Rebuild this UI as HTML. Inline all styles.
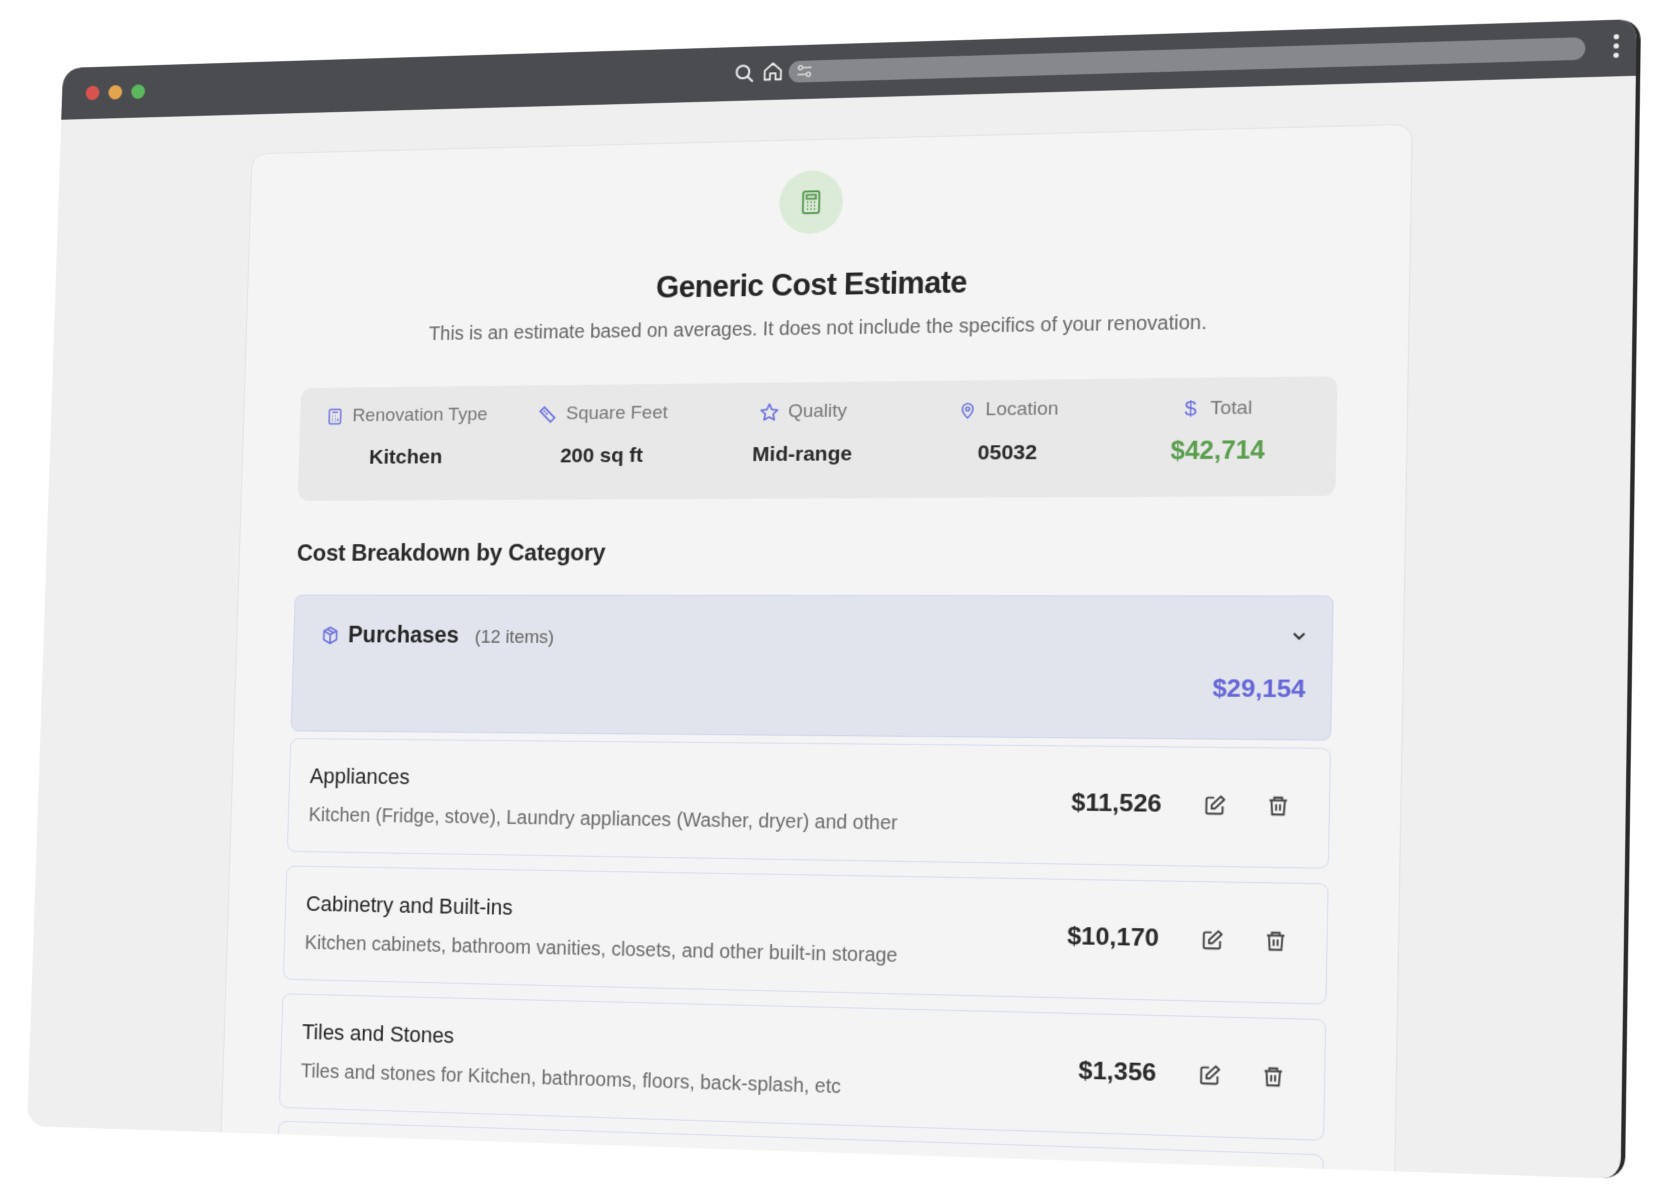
<!DOCTYPE html>
<html><head><meta charset="utf-8">
<style>
*{box-sizing:border-box;margin:0;padding:0}
html,body{width:1662px;height:1186px;background:#fff;overflow:hidden;font-family:"Liberation Sans",sans-serif}
#win{position:absolute;left:0;top:0;width:1590px;height:1110px;transform-origin:0 0;
transform:matrix3d(0.902333,-0.031862,0,-0.00005492, -0.032757,0.939568,0,-0.00001206, 0,0,1,0, 63,68,0,1);
background:#efefef;border-radius:20px;overflow:hidden;border-right:4px solid #2a2a2a;box-shadow:0 0 2px rgba(0,0,0,.2);clip-path:inset(0 round 20px)}
#bar{position:absolute;left:0;top:0;width:100%;height:55px;background:#4b4c50}
.dot{position:absolute;top:20px;width:15px;height:15px;border-radius:50%}
.abs{position:absolute}
#card{position:absolute;left:209px;top:96px;width:1170px;height:1100px;background:#f4f4f4;border:1px solid #e3e3e3;border-radius:16px}
.title{left:0;width:1590px;text-align:center;font-weight:bold;font-size:30.5px;color:#262626;letter-spacing:-0.6px}
.sub{left:0;width:1590px;text-align:center;font-size:19.5px;color:#666}
#stats{left:270px;top:342px;width:1042px;height:117px;background:#e8e8e8;border-radius:12px;display:flex;padding:0 11px}
.col{flex:1;text-align:center;position:relative}
.lab{position:absolute;top:19px;left:0;right:0;font-size:19px;color:#777;display:flex;justify-content:center;align-items:center;gap:9px}
.val{position:absolute;top:61px;left:0;right:0;font-size:21px;font-weight:bold;color:#2a2a2a}
.head{left:271px;top:500px;font-size:23.5px;font-weight:bold;color:#2a2a2a;letter-spacing:-0.2px}
#pur{left:270px;top:556px;width:1042px;height:141px;background:#e1e4ec;border:1px solid #cfd6ee;border-radius:8px}
.item{position:absolute;left:270px;width:1042px;height:117px;background:#f4f4f4;border:1.5px solid #d6dcf0;border-radius:9px}
.it{position:absolute;left:21px;top:26px;font-size:21.5px;color:#262626}
.id{position:absolute;left:21px;top:67px;font-size:19.5px;color:#6b6b6b}
.pr{position:absolute;right:159px;top:42px;font-size:24.5px;font-weight:bold;color:#2a2a2a}
.ed{position:absolute;right:97px;top:45px}
.tr{position:absolute;right:37px;top:45px}
</style></head><body>
<div id="win">
 <div id="bar">
  <div class="dot" style="left:26px;background:#d9534f"></div>
  <div class="dot" style="left:51px;background:#e2a54d"></div>
  <div class="dot" style="left:76px;background:#5cb85c"></div>
  <svg class="abs" style="left:712px;top:16px" width="22" height="22" viewBox="0 0 24 24" fill="none" stroke="#eee" stroke-width="2.2" stroke-linecap="round"><circle cx="10.5" cy="10.5" r="7"/><path d="M16 16l5 5"/></svg>
  <svg class="abs" style="left:741px;top:15px" width="22" height="22" viewBox="0 0 24 24" fill="none" stroke="#eee" stroke-width="2" stroke-linejoin="round"><path d="M3 11L12 3l9 8v10h-6v-7h-6v7H3z"/></svg>
  <div class="abs" style="left:768px;top:16px;width:771px;height:22px;border-radius:11px;background:#86888b"></div>
  <svg class="abs" style="left:776px;top:19px" width="16" height="16" viewBox="0 0 16 16" fill="none" stroke="#ddd" stroke-width="1.5"><circle cx="4" cy="4" r="2"/><path d="M7 4h8M1 11h8"/><circle cx="12" cy="11" r="2"/></svg>
  <div class="abs" style="left:1565px;top:14px;width:5px;height:5px;border-radius:50%;background:#eee;box-shadow:0 9px 0 #eee,0 18px 0 #eee"></div>
 </div>
 <div id="card"></div>
 <div class="abs" style="left:762px;top:128px;width:64px;height:64px;border-radius:50%;background:#dcebd8"></div>
 <svg class="abs" style="left:780px;top:146px" width="28" height="28" viewBox="0 0 24 24" fill="none" stroke="#5b9b56" stroke-width="1.7"><rect x="5" y="2.5" width="14" height="19" rx="2"/><rect x="8" y="5.5" width="8" height="3.5"/><path d="M8.5 12h1M11.5 12h1M14.5 12h1M8.5 15h1M11.5 15h1M14.5 15h1M8.5 18h1M11.5 18h1M14.5 18h1"/></svg>
 <div class="abs title" style="top:227px">Generic Cost Estimate</div>
 <div class="abs sub" style="top:277px">This is an estimate based on averages. It does not include the specifics of your renovation.</div>
 <div id="stats" class="abs">
  <div class="col"><div class="lab"><svg width="18" height="20" viewBox="0 0 24 24" fill="none" stroke="#6b6fe0" stroke-width="2"><rect x="4" y="2" width="16" height="20" rx="2"/><path d="M8 6h8M8 11h1M12 11h1M16 11h0M8 15h1M12 15h1M8 18h1M12 18h1M16 15v3"/></svg>Renovation Type</div><div class="val">Kitchen</div></div>
  <div class="col"><div class="lab"><svg width="20" height="20" viewBox="0 0 24 24" fill="none" stroke="#6b6fe0" stroke-width="2"><path d="M3 8l5-5 13 13-5 5z"/><path d="M7 7l2 2M10 5l1 1M10 10l2 2M13 8l1 1"/></svg>Square Feet</div><div class="val">200 sq ft</div></div>
  <div class="col"><div class="lab"><svg width="20" height="20" viewBox="0 0 24 24" fill="none" stroke="#6b6fe0" stroke-width="2" stroke-linejoin="round"><path d="M12 2l3 6.5 7 .8-5.2 4.8 1.4 7L12 17.6 5.8 21l1.4-7L2 9.3l7-.8z"/></svg>Quality</div><div class="val">Mid-range</div></div>
  <div class="col"><div class="lab"><svg width="18" height="20" viewBox="0 0 24 24" fill="none" stroke="#6b6fe0" stroke-width="2"><path d="M12 22s7-7 7-12a7 7 0 0 0-14 0c0 5 7 12 7 12z"/><circle cx="12" cy="10" r="2.5"/></svg>Location</div><div class="val">05032</div></div>
  <div class="col"><div class="lab"><span style="color:#6b6fe0;font-size:21px;margin-right:4px">$</span>Total</div><div class="val" style="color:#5a9e4e;font-size:25px;top:58px">$42,714</div></div>
 </div>
 <div class="abs head">Cost Breakdown by Category</div>
 <div id="pur" class="abs">
  <svg class="abs" style="left:28px;top:31px" width="20" height="20" viewBox="0 0 24 24" fill="none" stroke="#6b6fe0" stroke-width="2" stroke-linejoin="round"><path d="M12 2l8 4.5v11L12 22l-8-4.5v-11z"/><path d="M4 6.5l8 4.5 8-4.5M12 11v11M8 4.3l8 4.5"/></svg>
  <div class="abs" style="left:57px;top:27px;font-size:23px;font-weight:bold;color:#262626">Purchases</div>
  <div class="abs" style="left:190px;top:31px;font-size:18.5px;color:#666">(12 items)</div>
  <svg class="abs" style="right:23px;top:30px" width="16" height="16" viewBox="0 0 16 16" fill="none" stroke="#333" stroke-width="2"><path d="M3 6l5 5 5-5"/></svg>
  <div class="abs" style="right:24px;top:77px;font-size:24.5px;font-weight:bold;color:#6466d8">$29,154</div>
 </div>
 <div class="item" style="top:704px"><div class="it">Appliances</div><div class="id">Kitchen (Fridge, stove), Laundry appliances (Washer, dryer) and other</div><div class="pr">$11,526</div>
  <svg class="ed" width="22" height="22" viewBox="0 0 24 24" fill="none" stroke="#444" stroke-width="2" stroke-linejoin="round"><path d="M11 4H5a2 2 0 0 0-2 2v13a2 2 0 0 0 2 2h13a2 2 0 0 0 2-2v-6"/><path d="M18 2.5l3.5 3.5L12 15.5H8.5V12z"/></svg>
  <svg class="tr" width="22" height="22" viewBox="0 0 24 24" fill="none" stroke="#444" stroke-width="2"><path d="M3 6h18M8 6V3h8v3M5 6l1 15h12l1-15M10 10v7M14 10v7"/></svg></div>
 <div class="item" style="top:835px"><div class="it">Cabinetry and Built-ins</div><div class="id">Kitchen cabinets, bathroom vanities, closets, and other built-in storage</div><div class="pr">$10,170</div>
  <svg class="ed" width="22" height="22" viewBox="0 0 24 24" fill="none" stroke="#444" stroke-width="2" stroke-linejoin="round"><path d="M11 4H5a2 2 0 0 0-2 2v13a2 2 0 0 0 2 2h13a2 2 0 0 0 2-2v-6"/><path d="M18 2.5l3.5 3.5L12 15.5H8.5V12z"/></svg>
  <svg class="tr" width="22" height="22" viewBox="0 0 24 24" fill="none" stroke="#444" stroke-width="2"><path d="M3 6h18M8 6V3h8v3M5 6l1 15h12l1-15M10 10v7M14 10v7"/></svg></div>
 <div class="item" style="top:966px"><div class="it">Tiles and Stones</div><div class="id">Tiles and stones for Kitchen, bathrooms, floors, back-splash, etc</div><div class="pr">$1,356</div>
  <svg class="ed" width="22" height="22" viewBox="0 0 24 24" fill="none" stroke="#444" stroke-width="2" stroke-linejoin="round"><path d="M11 4H5a2 2 0 0 0-2 2v13a2 2 0 0 0 2 2h13a2 2 0 0 0 2-2v-6"/><path d="M18 2.5l3.5 3.5L12 15.5H8.5V12z"/></svg>
  <svg class="tr" width="22" height="22" viewBox="0 0 24 24" fill="none" stroke="#444" stroke-width="2"><path d="M3 6h18M8 6V3h8v3M5 6l1 15h12l1-15M10 10v7M14 10v7"/></svg></div>
 <div class="item" style="top:1096px"></div>
</div>
</body></html>
